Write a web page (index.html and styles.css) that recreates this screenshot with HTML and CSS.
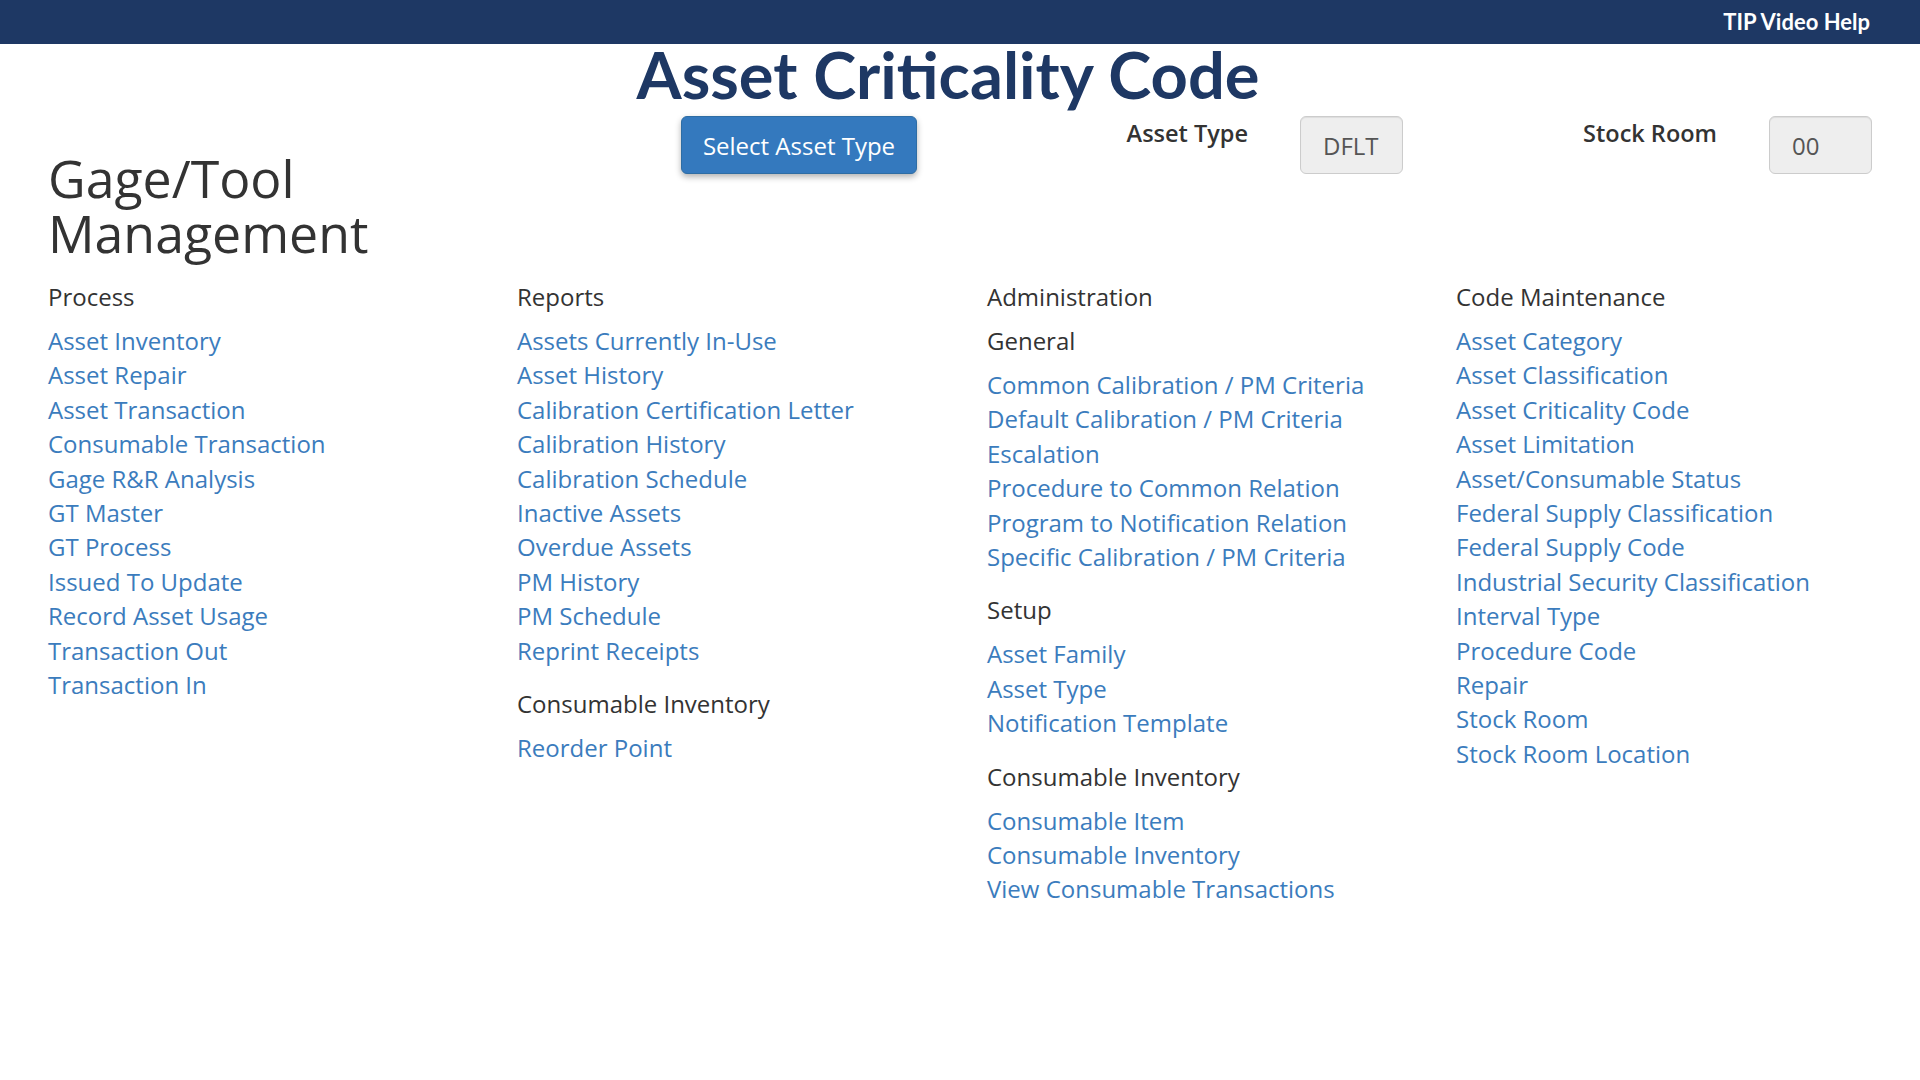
FILE: index.html
```html
<!DOCTYPE html>
<html lang="en">
    <head>
        <meta charset="UTF-8" />
        <meta name="viewport" content="width=device-width, initial-scale=1.0" />
        <title>Asset Criticality Code</title>

        <link rel="stylesheet" href="styles.css">

    </head>
    <body>
        <div class="topbar">
            <a class="video-help" href="#">TIP Video Help</a>
        </div>

        <h2 class="page-title">Asset Criticality Code</h2>

        <div class="header-row">
            <div class="app-name">
                <h1>Gage/Tool Management</h1>
            </div>
            <div class="controls">
                <button type="button" class="pick-btn">Select Asset Type</button>
                <div class="field field-type">
                    <label for="assetType">Asset Type</label>
                    <input type="text" id="assetType" class="readonly-box" value="DFLT" readonly />
                </div>
                <div class="field field-room">
                    <label for="stockRoom">Stock Room</label>
                    <input type="text" id="stockRoom" class="readonly-box" value="00" readonly />
                </div>
            </div>
        </div>

        <div class="menu-grid">
            <div class="menu-col">
                <h4 class="col-title">Process</h4>
                <ul class="link-list">
                    <li><a href="#">Asset Inventory</a></li>
                    <li><a href="#">Asset Repair</a></li>
                    <li><a href="#">Asset Transaction</a></li>
                    <li><a href="#">Consumable Transaction</a></li>
                    <li><a href="#">Gage R&amp;R Analysis</a></li>
                    <li><a href="#">GT Master</a></li>
                    <li><a href="#">GT Process</a></li>
                    <li><a href="#">Issued To Update</a></li>
                    <li><a href="#">Record Asset Usage</a></li>
                    <li><a href="#">Transaction Out</a></li>
                    <li><a href="#">Transaction In</a></li>
                </ul>
            </div>

            <div class="menu-col">
                <h4 class="col-title">Reports</h4>
                <ul class="link-list">
                    <li><a href="#">Assets Currently In-Use</a></li>
                    <li><a href="#">Asset History</a></li>
                    <li><a href="#">Calibration Certification Letter</a></li>
                    <li><a href="#">Calibration History</a></li>
                    <li><a href="#">Calibration Schedule</a></li>
                    <li><a href="#">Inactive Assets</a></li>
                    <li><a href="#">Overdue Assets</a></li>
                    <li><a href="#">PM History</a></li>
                    <li><a href="#">PM Schedule</a></li>
                    <li><a href="#">Reprint Receipts</a></li>
                </ul>
                <div class="group">
                    <h5 class="group-title">Consumable Inventory</h5>
                    <ul class="link-list">
                        <li><a href="#">Reorder Point</a></li>
                    </ul>
                </div>
            </div>

            <div class="menu-col">
                <h4 class="col-title">Administration</h4>
                <div class="group">
                    <h5 class="group-title">General</h5>
                    <ul class="link-list">
                        <li><a href="#">Common Calibration / PM Criteria</a></li>
                        <li><a href="#">Default Calibration / PM Criteria</a></li>
                        <li><a href="#">Escalation</a></li>
                        <li><a href="#">Procedure to Common Relation</a></li>
                        <li><a href="#">Program to Notification Relation</a></li>
                        <li><a href="#">Specific Calibration / PM Criteria</a></li>
                    </ul>
                </div>
                <div class="group">
                    <h5 class="group-title">Setup</h5>
                    <ul class="link-list">
                        <li><a href="#">Asset Family</a></li>
                        <li><a href="#">Asset Type</a></li>
                        <li><a href="#">Notification Template</a></li>
                    </ul>
                </div>
                <div class="group">
                    <h5 class="group-title">Consumable Inventory</h5>
                    <ul class="link-list">
                        <li><a href="#">Consumable Item</a></li>
                        <li><a href="#">Consumable Inventory</a></li>
                        <li><a href="#">View Consumable Transactions</a></li>
                    </ul>
                </div>
            </div>

            <div class="menu-col">
                <h4 class="col-title">Code Maintenance</h4>
                <ul class="link-list">
                    <li><a href="#">Asset Category</a></li>
                    <li><a href="#">Asset Classification</a></li>
                    <li><a href="#">Asset Criticality Code</a></li>
                    <li><a href="#">Asset Limitation</a></li>
                    <li><a href="#">Asset/Consumable Status</a></li>
                    <li><a href="#">Federal Supply Classification</a></li>
                    <li><a href="#">Federal Supply Code</a></li>
                    <li><a href="#">Industrial Security Classification</a></li>
                    <li><a href="#">Interval Type</a></li>
                    <li><a href="#">Procedure Code</a></li>
                    <li><a href="#">Repair</a></li>
                    <li><a href="#">Stock Room</a></li>
                    <li><a href="#">Stock Room Location</a></li>
                </ul>
            </div>
        </div>
    </body>
</html>
```

FILE: styles.css
```css
body {
    font-family: "Open Sans", Arial, sans-serif;
    font-size: 24px;
    line-height: 34.4px;
    color: #333;
    background-color: #fff;
    margin: 0;
}

a {
    color: #3b7cbd;
    text-decoration: none;
}

a:hover {
    text-decoration: underline;
}

/* top navigation bar */
.topbar {
    height: 44px;
    background-color: #1e3864;
    display: flex;
    align-items: center;
    justify-content: flex-end;
    padding-right: 50px;
}

.video-help {
    font-family: Lato, "Open Sans", sans-serif;
    font-weight: 700;
    font-size: 22px;
    line-height: 26px;
    color: #fff;
}

.page-title {
    font-family: Lato, "Open Sans", sans-serif;
    font-weight: 700;
    font-size: 65px;
    line-height: 58px;
    color: #1e3864;
    text-align: center;
    margin: 1px 0 0;
    padding-right: 24px;
}

/* header row: app name + asset type controls */
.header-row {
    display: flex;
    align-items: flex-start;
    margin-top: 13px;
    padding-left: 48px;
}

.app-name {
    width: 469px;
    flex-shrink: 0;
}

.app-name h1 {
    font-weight: 400;
    font-size: 51.8px;
    line-height: 55px;
    margin: 35px 0 0;
    color: #333;
}

.controls {
    display: flex;
    align-items: flex-start;
}

.pick-btn {
    margin-left: 164px;
    width: 236px;
    height: 58px;
    padding: 0;
    font-family: "Open Sans", Arial, sans-serif;
    font-size: 24px;
    color: #fff;
    background-color: #3479be;
    border: 1px solid #2e6da4;
    border-radius: 6px;
    box-shadow: 0 3px 6px rgba(0, 0, 0, 0.3);
    cursor: pointer;
}

.pick-btn:hover {
    background-color: #286090;
}

.field {
    display: flex;
    justify-content: flex-end;
    align-items: flex-start;
    gap: 52px;
}

.field-type {
    width: 486px;
}

.field-room {
    width: 469px;
}

.field label {
    font-weight: 600;
    font-size: 23.5px;
    color: #333;
    white-space: nowrap;
}

.readonly-box {
    box-sizing: border-box;
    width: 103px;
    height: 58px;
    padding: 0 22px;
    font-family: "Open Sans", Arial, sans-serif;
    font-size: 24px;
    color: #555;
    background-color: #eee;
    border: 1px solid #ccc;
    border-radius: 6px;
    box-shadow: inset 0 1px 1px rgba(0, 0, 0, 0.075);
    outline: none;
}

/* menu columns */
.menu-grid {
    display: grid;
    grid-template-columns: 469px 470px 469px 1fr;
    padding-left: 48px;
    margin-top: 19px;
}

.col-title,
.group-title {
    font-size: 24px;
    font-weight: 400;
    line-height: 34.4px;
    color: #333;
    margin: 0 0 9.6px;
}

.group + .group,
.link-list + .group {
    margin-top: 19px;
}

.link-list {
    list-style: none;
    margin: 0;
    padding: 0;
}
```
